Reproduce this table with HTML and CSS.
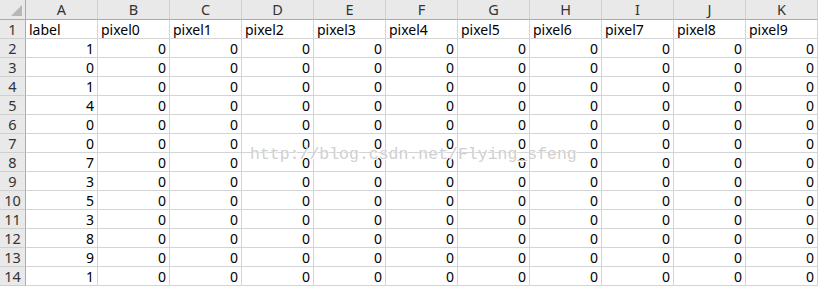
FILE: index.html
```html
<!DOCTYPE html>
<html>
<head>
<meta charset="utf-8">
<link rel="stylesheet" href="styles.css">
</head>
<body>
<div class="wrap">
<div class="sheet">
<div class="corner"><span class="tri"></span></div><div class="h">A</div><div class="h">B</div><div class="h">C</div><div class="h">D</div><div class="h">E</div><div class="h">F</div><div class="h">G</div><div class="h">H</div><div class="h">I</div><div class="h">J</div><div class="h">K</div>
<div class="r">1</div><div class="c t">label</div><div class="c t">pixel0</div><div class="c t">pixel1</div><div class="c t">pixel2</div><div class="c t">pixel3</div><div class="c t">pixel4</div><div class="c t">pixel5</div><div class="c t">pixel6</div><div class="c t">pixel7</div><div class="c t">pixel8</div><div class="c t">pixel9</div>
<div class="r">2</div><div class="c">1</div><div class="c">0</div><div class="c">0</div><div class="c">0</div><div class="c">0</div><div class="c">0</div><div class="c">0</div><div class="c">0</div><div class="c">0</div><div class="c">0</div><div class="c">0</div>
<div class="r">3</div><div class="c">0</div><div class="c">0</div><div class="c">0</div><div class="c">0</div><div class="c">0</div><div class="c">0</div><div class="c">0</div><div class="c">0</div><div class="c">0</div><div class="c">0</div><div class="c">0</div>
<div class="r">4</div><div class="c">1</div><div class="c">0</div><div class="c">0</div><div class="c">0</div><div class="c">0</div><div class="c">0</div><div class="c">0</div><div class="c">0</div><div class="c">0</div><div class="c">0</div><div class="c">0</div>
<div class="r">5</div><div class="c">4</div><div class="c">0</div><div class="c">0</div><div class="c">0</div><div class="c">0</div><div class="c">0</div><div class="c">0</div><div class="c">0</div><div class="c">0</div><div class="c">0</div><div class="c">0</div>
<div class="r">6</div><div class="c">0</div><div class="c">0</div><div class="c">0</div><div class="c">0</div><div class="c">0</div><div class="c">0</div><div class="c">0</div><div class="c">0</div><div class="c">0</div><div class="c">0</div><div class="c">0</div>
<div class="r">7</div><div class="c">0</div><div class="c">0</div><div class="c">0</div><div class="c">0</div><div class="c">0</div><div class="c">0</div><div class="c">0</div><div class="c">0</div><div class="c">0</div><div class="c">0</div><div class="c">0</div>
<div class="r">8</div><div class="c">7</div><div class="c">0</div><div class="c">0</div><div class="c">0</div><div class="c">0</div><div class="c">0</div><div class="c">0</div><div class="c">0</div><div class="c">0</div><div class="c">0</div><div class="c">0</div>
<div class="r">9</div><div class="c">3</div><div class="c">0</div><div class="c">0</div><div class="c">0</div><div class="c">0</div><div class="c">0</div><div class="c">0</div><div class="c">0</div><div class="c">0</div><div class="c">0</div><div class="c">0</div>
<div class="r">10</div><div class="c">5</div><div class="c">0</div><div class="c">0</div><div class="c">0</div><div class="c">0</div><div class="c">0</div><div class="c">0</div><div class="c">0</div><div class="c">0</div><div class="c">0</div><div class="c">0</div>
<div class="r">11</div><div class="c">3</div><div class="c">0</div><div class="c">0</div><div class="c">0</div><div class="c">0</div><div class="c">0</div><div class="c">0</div><div class="c">0</div><div class="c">0</div><div class="c">0</div><div class="c">0</div>
<div class="r">12</div><div class="c">8</div><div class="c">0</div><div class="c">0</div><div class="c">0</div><div class="c">0</div><div class="c">0</div><div class="c">0</div><div class="c">0</div><div class="c">0</div><div class="c">0</div><div class="c">0</div>
<div class="r">13</div><div class="c">9</div><div class="c">0</div><div class="c">0</div><div class="c">0</div><div class="c">0</div><div class="c">0</div><div class="c">0</div><div class="c">0</div><div class="c">0</div><div class="c">0</div><div class="c">0</div>
<div class="r">14</div><div class="c">1</div><div class="c">0</div><div class="c">0</div><div class="c">0</div><div class="c">0</div><div class="c">0</div><div class="c">0</div><div class="c">0</div><div class="c">0</div><div class="c">0</div><div class="c">0</div>
</div>
<div class="watermark">http://blog.csdn.net/Flying_sfeng</div>
</div>
</body>
</html>
```
FILE: styles.css
```css
* { box-sizing: border-box; }
html, body { margin: 0; padding: 0; background: #ffffff; }
body { width: 820px; height: 286px; overflow: hidden; }
.wrap { position: relative; width: 820px; height: 286px; }
.sheet {
  display: grid;
  grid-template-columns: 26px repeat(11, 72px);
  grid-template-rows: 20px repeat(14, 19px);
  font-family: "Noto Sans", "Liberation Sans", sans-serif;
  font-size: 14px;
  color: #000;
}
.corner {
  position: relative;
  background: #e9e9e9;
  border-right: 1px solid #ababab;
  border-bottom: 1px solid #ababab;
}
.tri {
  position: absolute;
  right: 3px;
  bottom: 3px;
  width: 0;
  height: 0;
  border-left: 11px solid transparent;
  border-bottom: 11px solid #b7b7b7;
}
.h {
  background: #e9e9e9;
  border-right: 1px solid #cfcfcf;
  border-bottom: 1px solid #ababab;
  text-align: center;
  line-height: 19px;
  color: #333;
  font-size: 14.5px;
}
.r {
  background: #e9e9e9;
  border-right: 1px solid #ababab;
  border-bottom: 1px solid #cfcfcf;
  text-align: center;
  line-height: 18px;
  color: #333;
  font-size: 14.5px;
}
.c {
  border-right: 1px solid #d4d4d4;
  border-bottom: 1px solid #d4d4d4;
  text-align: right;
  padding: 0 3px 0 3px;
  line-height: 19px;
  white-space: nowrap;
  overflow: hidden;
}
.c.t { text-align: left; padding-left: 3px; }
.watermark {
  position: absolute;
  left: 250px;
  top: 145px;
  font-family: "Liberation Mono", "DejaVu Sans Mono", monospace;
  font-size: 16.5px;
  line-height: 20px;
  color: #d0d0d0;
  text-shadow: 1px 1px 0 #fff;
  pointer-events: none;
}
```
